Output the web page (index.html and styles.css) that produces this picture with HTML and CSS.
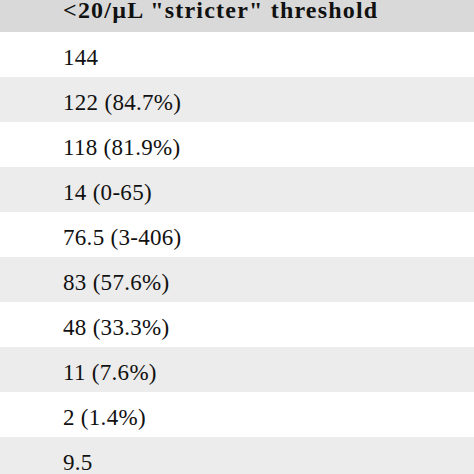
FILE: index.html
```html
<!DOCTYPE html>
<html>
<head>
<meta charset="utf-8">
<link rel="stylesheet" href="styles.css">
</head>
<body>
<table class="data">
  <thead>
    <tr class="head"><th>&lt;20/µL "stricter" threshold</th></tr>
  </thead>
  <tbody>
    <tr class="odd"><td>144</td></tr>
    <tr class="even"><td>122 (84.7%)</td></tr>
    <tr class="odd"><td>118 (81.9%)</td></tr>
    <tr class="even"><td>14 (0-65)</td></tr>
    <tr class="odd"><td>76.5 (3-406)</td></tr>
    <tr class="even"><td>83 (57.6%)</td></tr>
    <tr class="odd"><td>48 (33.3%)</td></tr>
    <tr class="even"><td>11 (7.6%)</td></tr>
    <tr class="odd"><td>2 (1.4%)</td></tr>
    <tr class="even"><td>9.5</td></tr>
  </tbody>
</table>
</body>
</html>
```
FILE: styles.css
```css
html, body {
  margin: 0;
  padding: 0;
  background: #ffffff;
  overflow: hidden;
}
.data {
  width: 474px;
  border-collapse: collapse;
  font-family: "Liberation Serif", "Times New Roman", serif;
  color: #111111;
}
.data th, .data td {
  text-align: left;
  padding: 0 0 0 63px;
  white-space: nowrap;
}
.head th {
  background: #d9d9d9;
  height: 32px;
  font-size: 24px;
  font-weight: bold;
  line-height: 20px;
  vertical-align: top;
  padding-top: 0;
  letter-spacing: 1.2px;
}
.data td {
  height: 45px;
  box-sizing: border-box;
  font-size: 23px;
  line-height: 37px;
  padding-top: 7px;
  vertical-align: top;
  letter-spacing: 0.3px;
}
.even td {
  background: #ececec;
}
.odd td {
  background: #ffffff;
}
```
